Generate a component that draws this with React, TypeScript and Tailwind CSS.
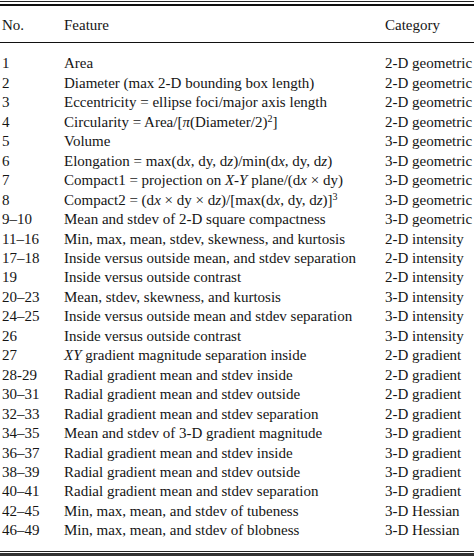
import React from 'react';

const I = ({ children }: { children: React.ReactNode }) => <i>{children}</i>;

const rows: [string, React.ReactNode, string][] = [
  ['1', 'Area', '2-D geometric'],
  ['2', 'Diameter (max 2-D bounding box length)', '2-D geometric'],
  ['3', 'Eccentricity = ellipse foci/major axis length', '2-D geometric'],
  [
    '4',
    <>
      Circularity = Area/[<I>π</I>(Diameter/2)<sup className="text-[10px]">2</sup>]
    </>,
    '2-D geometric',
  ],
  ['5', 'Volume', '3-D geometric'],
  [
    '6',
    <>
      Elongation = max(d<I>x</I>, dy, d<I>z</I>)/min(d<I>x</I>, dy, d<I>z</I>)
    </>,
    '3-D geometric',
  ],
  [
    '7',
    <>
      Compact1 = projection on <I>X-Y</I> plane/(d<I>x</I> × dy)
    </>,
    '3-D geometric',
  ],
  [
    '8',
    <>
      Compact2 = (d<I>x</I> × dy × d<I>z</I>)/[max(d<I>x</I>, dy, d<I>z</I>)]
      <sup className="text-[10px]">3</sup>
    </>,
    '3-D geometric',
  ],
  ['9–10', 'Mean and stdev of 2-D square compactness', '3-D geometric'],
  ['11–16', 'Min, max, mean, stdev, skewness, and kurtosis', '2-D intensity'],
  ['17–18', 'Inside versus outside mean, and stdev separation', '2-D intensity'],
  ['19', 'Inside versus outside contrast', '2-D intensity'],
  ['20–23', 'Mean, stdev, skewness, and kurtosis', '3-D intensity'],
  ['24–25', 'Inside versus outside mean and stdev separation', '3-D intensity'],
  ['26', 'Inside versus outside contrast', '3-D intensity'],
  [
    '27',
    <>
      <I>XY</I> gradient magnitude separation inside
    </>,
    '2-D gradient',
  ],
  ['28-29', 'Radial gradient mean and stdev inside', '2-D gradient'],
  ['30–31', 'Radial gradient mean and stdev outside', '2-D gradient'],
  ['32–33', 'Radial gradient mean and stdev separation', '2-D gradient'],
  ['34–35', 'Mean and stdev of 3-D gradient magnitude', '3-D gradient'],
  ['36–37', 'Radial gradient mean and stdev inside', '3-D gradient'],
  ['38–39', 'Radial gradient mean and stdev outside', '3-D gradient'],
  ['40–41', 'Radial gradient mean and stdev separation', '3-D gradient'],
  ['42–45', 'Min, max, mean, and stdev of tubeness', '3-D Hessian'],
  ['46–49', 'Min, max, mean, and stdev of blobness', '3-D Hessian'],
];

export default function App() {
  return (
    <div
      className="w-[474px] h-[557px] overflow-hidden bg-white text-[#151515] text-[15px] leading-[19.45px]"
      style={{ fontFamily: '"Liberation Serif", "Times New Roman", serif' }}
    >
      {/* top double rule */}
      <div className="pt-px">
        <div className="h-px bg-[#222]" />
        <div className="h-[2px]" />
        <div className="h-[2px] bg-[#111]" />
      </div>

      {/* header */}
      <div className="flex pt-[10px] pb-[7px] border-b border-[#111] whitespace-nowrap">
        <div className="w-[64px] pl-[2px]">No.</div>
        <div className="w-[321px]">Feature</div>
        <div className="flex-1">Category</div>
      </div>

      {/* body */}
      <div className="pt-[11px] pb-[10px]">
        {rows.map(([no, feature, cat], index) => (
          <div key={index} className="flex whitespace-nowrap">
            <div className="w-[64px] pl-[2px]">{no}</div>
            <div className="w-[321px]">{feature}</div>
            <div className="flex-1">{cat}</div>
          </div>
        ))}
      </div>

      {/* bottom double rule */}
      <div className="h-px bg-[#222]" />
      <div className="h-px" />
      <div className="h-[3px] bg-[#333]" />
    </div>
  );
}
